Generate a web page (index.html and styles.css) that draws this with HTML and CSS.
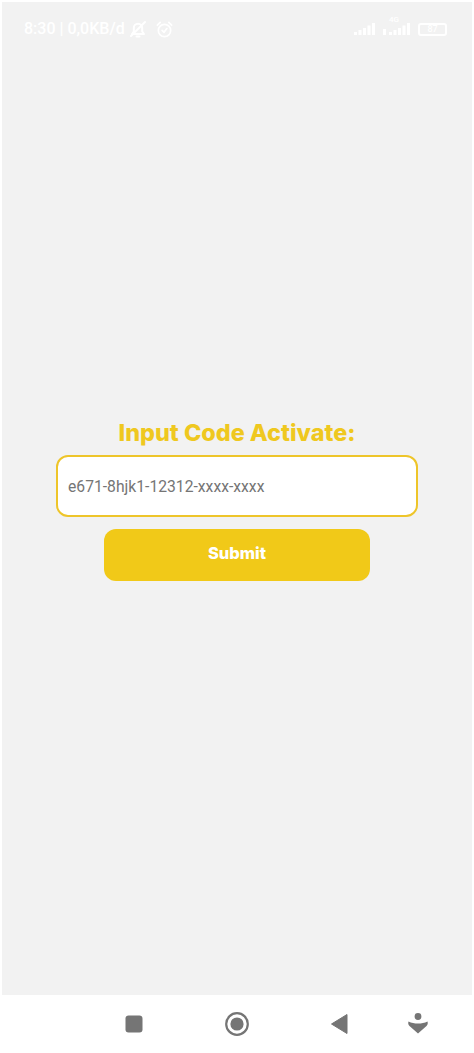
FILE: index.html
```html
<!DOCTYPE html>
<html lang="en">
<head>
<meta charset="utf-8">
<title>Input Code Activate</title>
<link rel="stylesheet" href="styles.css">
</head>
<body>
<div class="phone">
  <main class="screen">
    <header class="status">
      <div class="status-left">
        <span>8:30 | 0,0KB/d</span>
        <svg class="icon-bell" viewBox="0 0 20 20" width="20" height="20" fill="none" stroke="#fff" stroke-width="2" stroke-linecap="round" stroke-linejoin="round"><path d="M4 15h12l-1.800-2.500V9a4.200 4.200 0 0 0-8.400 0v3.500L4 15z"/><path d="M8.500 17.500h3"/><path d="M3 17L17 3"/></svg>
        <svg class="icon-alarm" viewBox="0 0 20 20" width="19" height="19" fill="none" stroke="#fff" stroke-width="1.800" stroke-linecap="round" stroke-linejoin="round"><circle cx="10" cy="11" r="6.500"/><path d="M2.500 5.500L5.500 2.500M17.500 5.500L14.500 2.500"/><path d="M7.500 11l2 2 3-4"/></svg>
      </div>
      <div class="status-right">
        <svg viewBox="0 0 22 14" width="22" height="14" fill="#fff"><rect x="0" y="10" width="3" height="3"/><rect x="4.500" y="8" width="3" height="5"/><rect x="9" y="6" width="3" height="7"/><rect x="13.500" y="3.500" width="3" height="9.500"/><rect x="18" y="1" width="3" height="12"/></svg>
        <div class="signal-lte">
          <span class="lte">4G</span>
          <svg viewBox="0 0 28 14" width="28" height="14" fill="#fff"><rect x="0" y="7" width="3" height="6"/><rect x="6" y="10" width="3" height="3"/><rect x="10.500" y="8" width="3" height="5"/><rect x="15" y="6" width="3" height="7"/><rect x="19.500" y="3.500" width="3" height="9.500"/><rect x="24" y="1" width="3" height="12"/></svg>
        </div>
        <div class="battery"><span class="battery-level">87</span></div>
      </div>
    </header>
    <section class="form">
      <h1 class="title">Input Code Activate:</h1>
      <div class="code-field">e671-8hjk1-12312-xxxx-xxxx</div>
      <button class="submit" type="button">Submit</button>
    </section>
  </main>
  <nav class="navbar">
    <svg viewBox="0 0 20 20" width="20" height="20" class="nav-square"><rect x="1.500" y="1.500" width="17" height="17" rx="3" fill="#757575"/></svg>
    <svg viewBox="0 0 26 26" width="26" height="26" class="nav-home"><circle cx="13" cy="13" r="10.800" fill="none" stroke="#757575" stroke-width="2.200"/><circle cx="13" cy="13" r="6.600" fill="#757575"/></svg>
    <svg viewBox="0 0 20 22" width="20" height="22" class="nav-back"><path d="M1.500 11L17 1.500v19z" fill="#757575" stroke="#757575" stroke-linejoin="round"/></svg>
    <svg viewBox="0 0 22 24" width="22" height="24" class="nav-extra"><circle cx="11" cy="4.500" r="3.400" fill="#757575"/><path d="M1.500 9.500c3 1.500 6 2 9.500 2s6.500-.5 9.500-2c.6 1.500.2 3.500-1 4.500L11 21.500 2.500 14c-1.200-1-1.600-3-1-4.500z" fill="#757575"/></svg>
  </nav>
</div>
</body>
</html>
```
FILE: styles.css
```css
* { box-sizing: border-box; }
html, body { margin: 0; padding: 0; }
body { background: #fff; font-family: "Roboto", "Liberation Sans", sans-serif; }
.phone {
  width: 474px;
  height: 1053px;
  display: flex;
  flex-direction: column;
  padding: 2px 2px 0 2px;
  background: #fff;
}
.screen {
  flex: 1;
  background: #f2f2f2;
  display: flex;
  flex-direction: column;
  align-items: center;
}
.status {
  align-self: stretch;
  height: 52px;
  padding: 17px 25px 0 22px;
  display: flex;
  justify-content: space-between;
  align-items: flex-start;
  color: #fff;
  font-size: 16px;
  font-weight: 500;
  line-height: 20px;
}
.status-left { display: flex; align-items: center; gap: 3px; }
.icon-alarm { margin-left: 4px; }
.status-right { display: flex; align-items: center; gap: 7px; padding-top: 3px; }
.signal-lte { position: relative; display: flex; }
.lte { position: absolute; left: 6px; top: -6px; font-size: 8px; line-height: 8px; }
.battery {
  width: 29px;
  height: 13px;
  border: 2px solid #fff;
  border-radius: 3px;
  font-size: 9px;
  line-height: 9px;
  text-align: center;
}
.form {
  display: flex;
  flex-direction: column;
  align-items: center;
  padding-top: 365px;
}
.title {
  margin: 0;
  font-family: "Inter", "Liberation Sans", sans-serif;
  font-size: 23.400px;
  font-weight: 800;
  line-height: 28px;
  color: #efc81f;
}
.code-field {
  width: 362px;
  height: 62px;
  margin-top: 8px;
  padding: 0 10px;
  border: 2.500px solid #eec52a;
  border-radius: 12px;
  background: #fff;
  display: flex;
  align-items: center;
  font-size: 15.700px;
  color: #757575;
}
.submit {
  width: 266px;
  height: 52px;
  margin-top: 12px;
  padding: 0 0 5px;
  border: 0;
  border-radius: 12px;
  background: #f1c918;
  color: #fff;
  font-family: "Inter", "Liberation Sans", sans-serif;
  font-size: 16.500px;
  font-weight: 800;
}
.navbar {
  height: 58px;
  flex: none;
  margin: 0 -2px;
  background: #fff;
  display: flex;
  align-items: center;
  padding-left: 124px;
}
.nav-home { margin-left: 80px; }
.nav-back { margin-left: 80px; }
.nav-extra { margin-left: 57px; }
```
